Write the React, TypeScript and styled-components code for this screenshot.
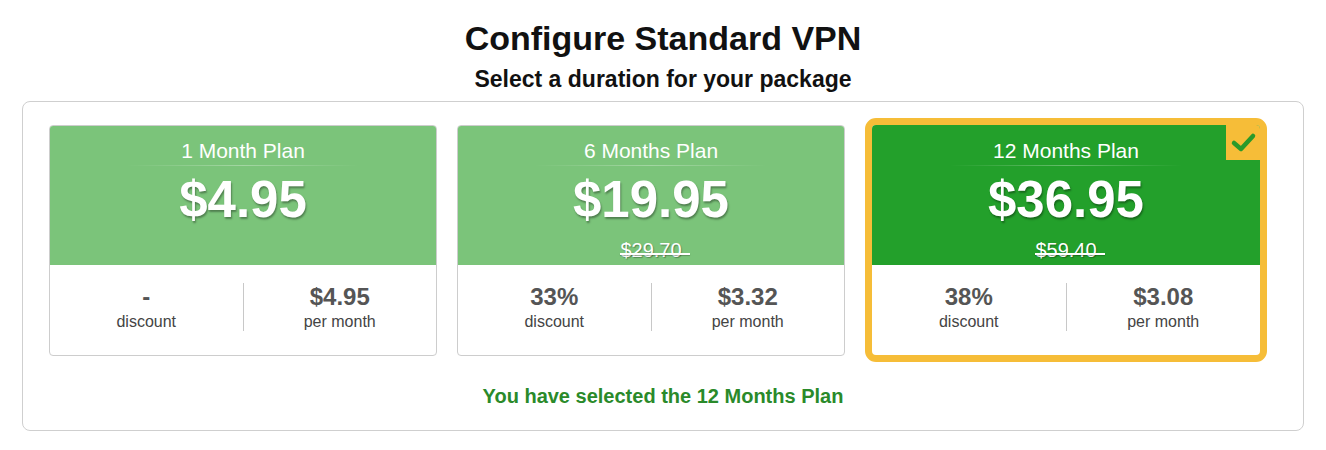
import React from "react";
import styled, { createGlobalStyle } from "styled-components";

const GlobalStyle = createGlobalStyle`
  html, body { margin: 0; padding: 0; background: #ffffff; }
  body { font-family: "Liberation Sans", Arial, Helvetica, sans-serif; }
  * { box-sizing: border-box; }
`;

const Page = styled.div`
  padding: 0 22px;
`;

const Title = styled.h1`
  margin: 18px 0 0;
  font-size: 34px;
  line-height: 40px;
  font-weight: 700;
  color: #111;
  text-align: center;
`;

const Subtitle = styled.h2`
  margin: 7px 0 8px;
  font-size: 23px;
  line-height: 28px;
  font-weight: 700;
  color: #111;
  text-align: center;
`;

const Panel = styled.div`
  border: 1px solid #cfcfcf;
  border-radius: 8px;
  padding: 23px 0 22px 26px;
`;

const CardRow = styled.div`
  display: flex;
  gap: 20px;
  align-items: flex-start;
`;

const Card = styled.div<{ $selected?: boolean }>`
  position: relative;
  width: ${(p) => (p.$selected ? "402px" : "388px")};
  border: ${(p) => (p.$selected ? "7px solid #f6bd38" : "1px solid #cdcdcd")};
  border-radius: ${(p) => (p.$selected ? "11px" : "4px")};
  margin: ${(p) => (p.$selected ? "-7px 0 -7px" : "0")};
  background: #fff;
  overflow: hidden;
  cursor: pointer;
`;

const Header = styled.div<{ $selected?: boolean }>`
  height: ${(p) => (p.$selected ? "140px" : "139px")};
  background: ${(p) => (p.$selected ? "#23a02b" : "#7bc47a")};
  display: flex;
  flex-direction: column;
  align-items: center;
  padding-top: ${(p) => (p.$selected ? "14px" : "13px")};
  color: #fff;
`;

const PlanName = styled.div`
  font-size: 21px;
  line-height: 24px;
  color: #fff;
`;

const Rule = styled.div`
  width: 60%;
  height: 1px;
  margin-top: 2px;
  background: linear-gradient(
    to right,
    rgba(255, 255, 255, 0),
    rgba(255, 255, 255, 0.3),
    rgba(255, 255, 255, 0)
  );
`;

const Price = styled.div`
  margin-top: 6px;
  font-size: 51px;
  line-height: 56px;
  font-weight: 700;
  color: #fff;
  text-shadow: 1px 2px 2px rgba(0, 0, 0, 0.35);
`;

const OldPrice = styled.div`
  position: relative;
  margin-top: 10px;
  font-size: 20px;
  line-height: 24px;
  color: #fff;
  text-shadow: 1px 1px 1px rgba(0, 0, 0, 0.3);
  &::after {
    content: "";
    position: absolute;
    left: 0;
    right: -8px;
    top: 15px;
    height: 2px;
    background: #fff;
    box-shadow: 0 1px 1px rgba(0, 0, 0, 0.25);
  }
`;

const Stats = styled.div`
  height: 90px;
  display: flex;
  align-items: center;
  padding-bottom: 6px;
`;

const Stat = styled.div`
  flex: 1;
  text-align: center;
`;

const StatValue = styled.div`
  font-size: 24px;
  line-height: 28px;
  font-weight: 700;
  color: #555;
`;

const StatLabel = styled.div`
  font-size: 16px;
  line-height: 20px;
  color: #444;
  margin-top: 1px;
`;

const Divider = styled.div`
  width: 1px;
  height: 48px;
  background: #c8c8c8;
`;

const Badge = styled.div`
  position: absolute;
  top: 0;
  right: 0;
  width: 34px;
  height: 35px;
  background: #f6bd38;
  display: flex;
  align-items: center;
  justify-content: center;
`;

const Message = styled.div`
  margin: 28px 0 0;
  padding-right: 26px;
  font-size: 20px;
  line-height: 24px;
  font-weight: 700;
  color: #2a8a2a;
  text-align: center;
`;

type Plan = {
  name: string;
  price: string;
  old?: string;
  discount: string;
  monthly: string;
};

const plans: Plan[] = [
  { name: "1 Month Plan", price: "$4.95", discount: "-", monthly: "$4.95" },
  { name: "6 Months Plan", price: "$19.95", old: "$29.70", discount: "33%", monthly: "$3.32" },
  { name: "12 Months Plan", price: "$36.95", old: "$59.40", discount: "38%", monthly: "$3.08" },
];

export default function App() {
  const [selected, setSelected] = React.useState(2);
  return (
    <Page>
      <GlobalStyle />
      <Title>Configure Standard VPN</Title>
      <Subtitle>Select a duration for your package</Subtitle>
      <Panel>
        <CardRow>
          {plans.map((p, i) => {
            const sel = i === selected;
            return (
              <Card key={p.name} $selected={sel} onClick={() => setSelected(i)}>
                <Header $selected={sel}>
                  <PlanName>{p.name}</PlanName>
                  <Rule />
                  <Price>{p.price}</Price>
                  {p.old && <OldPrice>{p.old}</OldPrice>}
                </Header>
                <Stats>
                  <Stat>
                    <StatValue>{p.discount}</StatValue>
                    <StatLabel>discount</StatLabel>
                  </Stat>
                  <Divider />
                  <Stat>
                    <StatValue>{p.monthly}</StatValue>
                    <StatLabel>per month</StatLabel>
                  </Stat>
                </Stats>
                {sel && (
                  <Badge>
                    <svg width="34" height="35" viewBox="0 0 34 35">
                      <polyline
                        points="8,18 15,24 27,11"
                        fill="none"
                        stroke="#2a9a2a"
                        strokeWidth="4.5"
                        strokeLinecap="round"
                        strokeLinejoin="round"
                      />
                    </svg>
                  </Badge>
                )}
              </Card>
            );
          })}
        </CardRow>
        <Message>You have selected the {plans[selected].name}</Message>
      </Panel>
    </Page>
  );
}
